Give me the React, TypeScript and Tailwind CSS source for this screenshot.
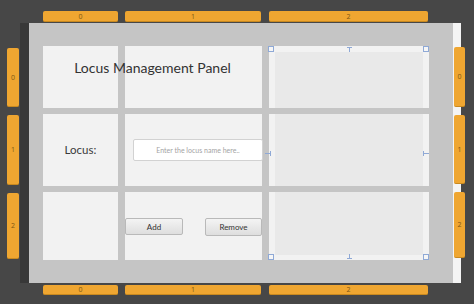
import React from "react";

const Bar = ({ label, className }: { label: string; className: string }) => (
  <div
    className={`flex items-center justify-center rounded-[2px] bg-[#efa631] border-b border-[#c9891f] text-[7px] leading-none text-[#7d5614] ${className}`}
    style={{ fontFamily: "'Open Sans', sans-serif" }}
  >
    {label}
  </div>
);

const Handle = ({ className }: { className: string }) => (
  <div className={`absolute ${className}`} />
);

export default function App() {
  const font = { fontFamily: "Lato, 'Open Sans', 'Liberation Sans', sans-serif" };
  return (
    <div className="w-[474px] h-[304px] bg-[#474747] overflow-hidden flex flex-col" style={font}>
      {/* top ruler */}
      <div className="mt-[11px] h-[11px] flex pl-[43px] gap-[7px]">
        <Bar label="0" className="w-[75px]" />
        <Bar label="1" className="w-[136px]" />
        <Bar label="2" className="ml-[1px] w-[159px]" />
      </div>

      {/* middle */}
      <div className="mt-[1px] flex h-[260px]">
        <div className="w-[7px]" />
        <div className="w-[12px] flex flex-col pt-[25px] gap-[8px]">
          <Bar label="0" className="h-[59px]" />
          <Bar label="1" className="h-[70px]" />
          <Bar label="2" className="h-[66px]" />
        </div>
        <div className="w-[1px]" />
        <div className="w-[9px] bg-[#383838]" />
        {/* panel */}
        <div className="w-[424px] bg-[#c5c5c5] pl-[14px] pt-[23px]">
          <div className="relative grid grid-cols-[75px_137px_160px] grid-rows-[62px_72px_68px] gap-x-[7px] gap-y-[6px]">
            {/* row 0 */}
            <div className="col-start-1 row-start-1 bg-[#f2f2f2]" />
            <div className="col-start-2 row-start-1 bg-[#f2f2f2]" />
            <div className="col-start-3 row-start-1 bg-[#f2f2f2] pt-[6px] px-[6px]">
              <div className="h-full bg-[#e9e9e9]" />
            </div>
            <div className="col-start-1 col-span-2 row-start-1 flex items-start justify-center pt-[12px] z-10">
              <span className="text-[14px] leading-[20px] text-[#333333]">Locus Management Panel</span>
            </div>

            {/* row 1 */}
            <div className="col-start-1 row-start-2 bg-[#f2f2f2] flex items-center justify-center">
              <span className="text-[11.5px] text-[#3a3a3a]">Locus:</span>
            </div>
            <div className="col-start-2 row-start-2 bg-[#f2f2f2] flex items-center pl-[8px]">
              <div className="w-[130px] h-[22px] mr-[-1px] bg-white border border-[#d2d2d2] rounded-[2px] flex items-center justify-center">
                <span className="text-[7px] text-[#a3a3a3]">Enter the locus name here..</span>
              </div>
            </div>
            <div className="col-start-3 row-start-2 bg-[#f2f2f2] px-[6px]">
              <div className="h-full bg-[#e9e9e9]" />
            </div>

            {/* row 2 */}
            <div className="col-start-1 row-start-3 bg-[#f2f2f2]" />
            <div className="col-start-2 row-start-3 bg-[#f2f2f2] flex justify-between items-start pt-[26px]">
              <button className="w-[58px] h-[17px] rounded-[2px] border border-[#b9b9b9] bg-gradient-to-b from-[#f4f4f4] to-[#dedede] text-[8px] text-[#333] flex items-center justify-center">
                Add
              </button>
              <button className="w-[57px] h-[18px] rounded-[2px] border border-[#b9b9b9] bg-gradient-to-b from-[#f4f4f4] to-[#dedede] text-[8px] text-[#333] flex items-center justify-center">
                Remove
              </button>
            </div>
            <div className="col-start-3 row-start-3 bg-[#f2f2f2] px-[6px] pb-[5px]">
              <div className="h-full bg-[#e9e9e9]" />
            </div>

            {/* selection handles */}
            <div className="absolute left-[225px] top-0 w-[161px] h-[214px] pointer-events-none z-20">
              <Handle className="left-0 top-0 w-[6px] h-[6px] border border-[#8fa9d6] bg-[#f6f6f6]" />
              <Handle className="right-0 top-0 w-[6px] h-[6px] border border-[#8fa9d6] bg-[#f6f6f6]" />
              <Handle className="left-0 bottom-0 w-[6px] h-[6px] border border-[#8fa9d6] bg-[#f6f6f6]" />
              <Handle className="right-0 bottom-0 w-[6px] h-[6px] border border-[#8fa9d6] bg-[#f6f6f6]" />
              {/* top center T */}
              <Handle className="left-[79px] top-[1px] w-[5px] h-[1px] bg-[#8fa9d6]" />
              <Handle className="left-[81px] top-[1px] w-[1px] h-[5px] bg-[#8fa9d6]" />
              {/* bottom center */}
              <Handle className="left-[79px] bottom-[1px] w-[5px] h-[1px] bg-[#8fa9d6]" />
              <Handle className="left-[81px] bottom-[1px] w-[1px] h-[5px] bg-[#8fa9d6]" />
              {/* left middle */}
              <Handle className="left-[-3px] top-[107px] w-[6px] h-[1px] bg-[#8fa9d6]" />
              <Handle className="left-[2px] top-[105px] w-[1px] h-[5px] bg-[#8fa9d6]" />
              {/* right middle */}
              <Handle className="right-0 top-[107px] w-[6px] h-[1px] bg-[#8fa9d6]" />
              <Handle className="right-[5px] top-[105px] w-[1px] h-[5px] bg-[#8fa9d6]" />
            </div>
          </div>
        </div>
        {/* right edge: white strip with row bars */}
        <div className="relative w-[12px]">
          <div className="absolute left-0 top-0 bottom-0 w-[8px] bg-[#f4f4f4]" />
          <div className="relative flex flex-col pt-[24px] gap-[8px] ml-[1px] w-[11px]">
            <Bar label="0" className="h-[60px]" />
            <Bar label="1" className="h-[69px]" />
            <Bar label="2" className="h-[66px]" />
          </div>
        </div>
      </div>

      {/* bottom ruler */}
      <div className="mt-[2px] h-[10px] flex pl-[43px] gap-[7px]">
        <Bar label="0" className="w-[75px]" />
        <Bar label="1" className="w-[136px]" />
        <Bar label="2" className="ml-[1px] w-[159px]" />
      </div>
    </div>
  );
}
